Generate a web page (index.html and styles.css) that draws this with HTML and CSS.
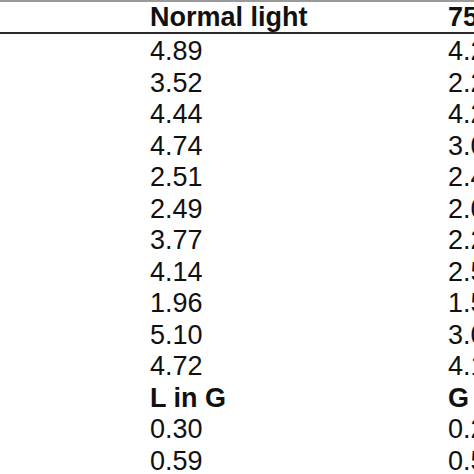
FILE: index.html
```html
<!DOCTYPE html>
<html>
<head>
<meta charset="utf-8">
<link rel="stylesheet" href="styles.css">
</head>
<body>
<div class="sheet">
  <div class="head">
    <span class="c1">Normal light</span>
    <span class="c2">75% light</span>
  </div>
  <div class="body">
    <div class="row"><span class="c1">4.89</span><span class="c2">4.21</span></div>
    <div class="row"><span class="c1">3.52</span><span class="c2">2.27</span></div>
    <div class="row"><span class="c1">4.44</span><span class="c2">4.23</span></div>
    <div class="row"><span class="c1">4.74</span><span class="c2">3.08</span></div>
    <div class="row"><span class="c1">2.51</span><span class="c2">2.41</span></div>
    <div class="row"><span class="c1">2.49</span><span class="c2">2.06</span></div>
    <div class="row"><span class="c1">3.77</span><span class="c2">2.25</span></div>
    <div class="row"><span class="c1">4.14</span><span class="c2">2.53</span></div>
    <div class="row"><span class="c1">1.96</span><span class="c2">1.57</span></div>
    <div class="row"><span class="c1">5.10</span><span class="c2">3.04</span></div>
    <div class="row"><span class="c1">4.72</span><span class="c2">4.12</span></div>
    <div class="row sub"><span class="c1">L in G</span><span class="c2">G in L</span></div>
    <div class="row"><span class="c1">0.30</span><span class="c2">0.24</span></div>
    <div class="row"><span class="c1">0.59</span><span class="c2">0.52</span></div>
  </div>
</div>
</body>
</html>
```
FILE: styles.css
```css
html, body {
  margin: 0;
  padding: 0;
  background: #fff;
}
.sheet {
  width: 474px;
  height: 474px;
  overflow: hidden;
  font-family: "Liberation Sans", Arial, sans-serif;
  font-size: 27px;
  color: #111;
  border-top: 2px solid #9a9a9a;
  box-sizing: border-box;
}
.head, .row {
  display: grid;
  grid-template-columns: 150px 298px 200px;
  white-space: nowrap;
}
.head {
  line-height: 30px;
  font-weight: bold;
  border-bottom: 2px solid #2a2a2a;
}
.body {
  padding-top: 2px;
}
.row {
  line-height: 31.5px;
}
.row.sub {
  font-weight: bold;
}
.c1 { grid-column: 2; }
.c2 { grid-column: 3; }
```
